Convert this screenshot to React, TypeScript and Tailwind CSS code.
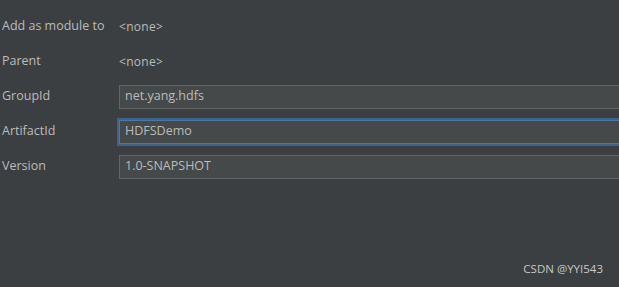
import React from 'react'

const font = { fontFamily: '"Segoe UI", "Open Sans", "Noto Sans", sans-serif' }

interface FieldRowProps {
  label: string
  value: string
  kind: 'text' | 'input' | 'focused'
}

const FieldRow: React.FC<FieldRowProps> = ({ label, value, kind }) => {
  return (
    <div className="flex h-[35px] items-center">
      <div className="w-[119px] shrink-0 pl-[2px] text-[12.5px] text-[#bbbbbb]">{label}</div>
      {kind === 'text' && (
        <div className="text-[12px] tracking-[0.3px] text-[#bbbbbb]">{value}</div>
      )}
      {kind === 'input' && (
        <div className="mr-[-20px] flex h-[24px] flex-1 items-center border border-[#646464] bg-[#45494a] pl-[5px] text-[12.5px] text-[#bbbbbb]">
          {value}
        </div>
      )}
      {kind === 'focused' && (
        <div className="mr-[-20px] flex h-[24px] flex-1 items-center border border-[#4a77a5] bg-[#45494a] pl-[5px] text-[12.5px] text-[#bbbbbb] shadow-[0_0_0_2px_#3e6387]">
          {value}
        </div>
      )}
    </div>
  )
}

export default function App() {
  return (
    <div className="relative h-[287px] w-[619px] overflow-hidden bg-[#3c3f41]" style={font}>
      <div className="flex flex-col pt-[9px]">
        <FieldRow label="Add as module to" value="<none>" kind="text" />
        <FieldRow label="Parent" value="<none>" kind="text" />
        <FieldRow label="GroupId" value="net.yang.hdfs" kind="input" />
        <FieldRow label="ArtifactId" value="HDFSDemo" kind="focused" />
        <FieldRow label="Version" value="1.0-SNAPSHOT" kind="input" />
      </div>
      <div className="absolute right-[16px] bottom-[10px] text-[11.5px] text-[#c8c8c8]">CSDN @YYI543</div>
    </div>
  )
}
